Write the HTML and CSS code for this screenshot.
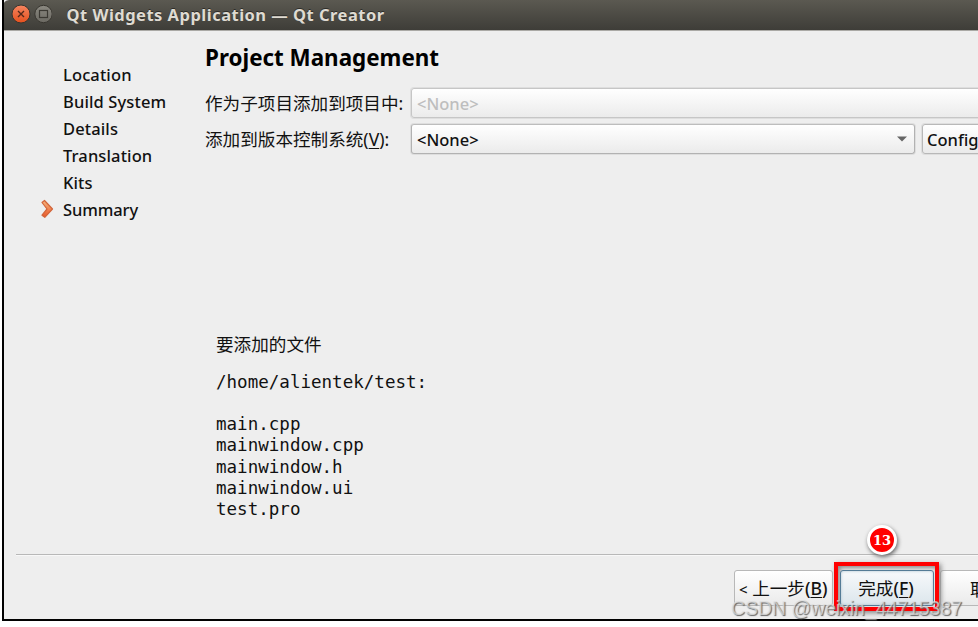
FILE: index.html
```
<!DOCTYPE html>
<html lang="zh-CN">
<head>
<meta charset="utf-8">
<title>Qt Widgets Application — Qt Creator</title>
<link rel="stylesheet" href="styles.css">
</head>
<body>
<div class="window">
  <header class="titlebar">
    <svg class="controls" width="42" height="22" viewBox="0 0 42 22">
      <defs>
        <linearGradient id="close" x1="0" y1="0" x2="0" y2="1"><stop offset="0" stop-color="#f58560"/><stop offset="1" stop-color="#e5501d"/></linearGradient>
        <linearGradient id="max" x1="0" y1="0" x2="0" y2="1"><stop offset="0" stop-color="#8b8981"/><stop offset="1" stop-color="#6b6962"/></linearGradient>
      </defs>
      <circle cx="11" cy="11" r="9" fill="url(#close)" stroke="#37352f" stroke-width="1"/>
      <path d="M8 8l6 6M14 8l-6 6" stroke="#54291a" stroke-width="1.4"/>
      <circle cx="33.500" cy="11" r="8.700" fill="url(#max)" stroke="#37352f" stroke-width="1"/>
      <rect x="29.500" y="7.500" width="8" height="7" fill="none" stroke="#3b3933" stroke-width="1.200"/>
    </svg>
    <span class="title">Qt Widgets Application — Qt Creator</span>
  </header>
  <div class="body">
    <ul class="steps">
      <li>Location</li>
      <li>Build System</li>
      <li>Details</li>
      <li>Translation</li>
      <li>Kits</li>
      <li class="current">
        <svg class="arrow" width="14" height="20" viewBox="0 0 14 20">
          <defs><linearGradient id="arr" x1="0" y1="0" x2="0" y2="1"><stop offset="0" stop-color="#f6b47c"/><stop offset="1" stop-color="#e8572a"/></linearGradient></defs>
          <path d="M2 3.500L4.500 1.500L12.500 10L4.800 18.300L2 16.200L7 10Z" fill="url(#arr)" stroke="#d2653a" stroke-width="1.200" stroke-linejoin="round"/>
        </svg><span>Summary</span></li>
    </ul>
    <main class="page">
      <h1>Project Management</h1>
      <div class="row">
        <label>作为子项目添加到项目中:</label>
        <div class="combo disabled"><span>&lt;None&gt;</span></div>
      </div>
      <div class="row">
        <label>添加到版本控制系统(<u>V</u>):</label>
        <div class="combo"><span>&lt;None&gt;</span>
          <svg width="10" height="6" viewBox="0 0 10 6"><path d="M0 .5H10L5 5.500Z" fill="#666"/></svg>
        </div>
        <button class="config">Configure...</button>
      </div>
      <section class="files">
        <p>要添加的文件</p>
        <pre>/home/alientek/test:

main.cpp
mainwindow.cpp
mainwindow.h
mainwindow.ui
test.pro</pre>
      </section>
    </main>
  </div>
  <footer class="actions">
    <button class="back"><i>&lt;</i> 上一步<b>(<u>B</u>)</b></button>
    <div class="finish-wrap"><button class="finish">完成<b>(<u>F</u>)</b></button><span class="badge">13</span></div>
    <button class="cancel">取消</button>
  </footer>
</div>
<div class="watermark">CSDN @weixin_44715387</div>
</body>
</html>
```
FILE: styles.css
```
* { box-sizing: border-box; }
body {
  margin: 0;
  height: 627px;
  overflow: hidden;
  position: relative;
  background: #fff;
  color: #111;
  font: 500 16.5px/27px "Noto Sans", "Noto Sans CJK SC", sans-serif;
}
.window {
  height: 621px;
  margin-left: 2px;
  display: flex;
  flex-direction: column;
  overflow: hidden;
  background: #eee;
  border-left: 2px solid #000;
  border-bottom: 2px solid #000;
}
.titlebar {
  height: 31px;
  flex: none;
  display: flex;
  align-items: center;
  margin-left: -1px;
  padding: 0 0 2px 7px;
  background: linear-gradient(#5b5951, #3e3d38);
  border-bottom: 1px solid #aaa9a5;
  border-top-left-radius: 6px;
  color: #dfdbd2;
}
.title {
  margin: 0 0 0 14.5px;
  font-size: 16.5px;
  font-weight: 700;
  letter-spacing: .48px;
  white-space: nowrap;
  text-shadow: 0 -1px #2d2c28;
}
.body { flex: none; height: 523px; display: flex; }
.steps {
  list-style: none;
  width: 201px;
  flex: none;
  margin: 0;
  padding: 30px 0 0 59px;
  letter-spacing: .12px;
}
.steps li { height: 27px; white-space: nowrap; }
.current { display: flex; align-items: center; letter-spacing: -.1px; }
.arrow { flex: none; margin: -1px 9px 0 -23px; }
.page { width: 850px; flex: none; }
h1 {
  margin: 10px 0 0;
  font-size: 22.4px;
  line-height: 34px;
  height: 47px;
  font-weight: 700;
  color: #000;
  white-space: nowrap;
}
.row { display: flex; height: 30px; margin-bottom: 6px; }
label {
  width: 206px;
  flex: none;
  font-size: 17.6px;
  font-weight: 400;
  line-height: 30px;
  white-space: nowrap;
}
u { text-underline-offset: 2px; text-decoration-thickness: 1px; }
.combo {
  width: 504px;
  flex: none;
  height: 30px;
  padding: 0 7px 0 5px;
  display: flex;
  align-items: center;
  justify-content: space-between;
  border: 1px solid #b2b2b2;
  border-top-color: #bdbdbd;
  border-radius: 3px;
  background: linear-gradient(#fff, #ebebeb);
  box-shadow: 0 0 0 1px #dedede;
}
.disabled { width: 640px; color: #bebebe; border-color: #c6c6c6; }
button {
  font: inherit;
  color: inherit;
  flex: none;
  padding: 0;
  border: 1px solid #b8b8b8;
  border-radius: 3px;
  background: linear-gradient(#fff, #eaeaea);
  white-space: nowrap;
}
.config { width: 110px; height: 30px; margin-left: 7px; padding-left: 4px; text-align: left; box-shadow: 0 0 0 1px #dedede; }
.files { margin: 177px 0 0 11px; }
.files p { margin: 0; font-size: 17.6px; font-weight: 400; line-height: 26px; }
pre { margin: 15px 0 0; font: 400 17.55px/21.150px "DejaVu Sans Mono", monospace; }
.actions {
  flex: none;
  height: 65px;
  margin-left: 12px;
  display: flex;
  align-items: flex-start;
  padding: 15px 0 0 718px;
  border-top: 1px solid #b8b8b8;
  box-shadow: inset 0 1px #f8f8f8;
  font-size: 17.6px;
  font-weight: 400;
}
.actions b { font-weight: 500; }
.back { width: 99px; height: 36px; padding: 2px 0 0 4px; text-align: left; }
.back i { font-style: normal; font-weight: 500; font-size: 15px; }
.finish-wrap {
  position: relative;
  flex: none;
  width: 105px;
  height: 49px;
  margin: -8px 0 0 1px;
  padding: 4px 2px;
  border: 4px solid #f00;
  box-shadow: 2px 2px 5px #888, inset 2px 2px 4px #888;
}
.finish {
  width: 94px;
  height: 36px;
  padding: 0 2px 0 0;
  border-color: #547b96;
  background: linear-gradient(#f7f9fb, #dce6ec);
  box-shadow: inset 0 0 3px #a9c1d0;
}
.badge {
  position: absolute;
  left: 29px;
  top: -41px;
  width: 30px;
  height: 30px;
  border: 3px solid #fff;
  border-radius: 50%;
  background: #f00;
  color: #fff;
  font: 700 13px/25px "DejaVu Serif", serif;
  text-align: center;
  box-shadow: 1px 2px 4px #666;
}
.cancel { width: 99px; height: 36px; margin-left: 1px; padding: 2px 0 0 29px; text-align: left; }
.watermark {
  position: absolute;
  left: 731px;
  top: 597px;
  font: 400 19.4px/22px "Liberation Sans", sans-serif;
  color: rgba(225, 225, 225, .7);
  text-shadow: 1px 1px 1px #666;
  white-space: nowrap;
}
```
